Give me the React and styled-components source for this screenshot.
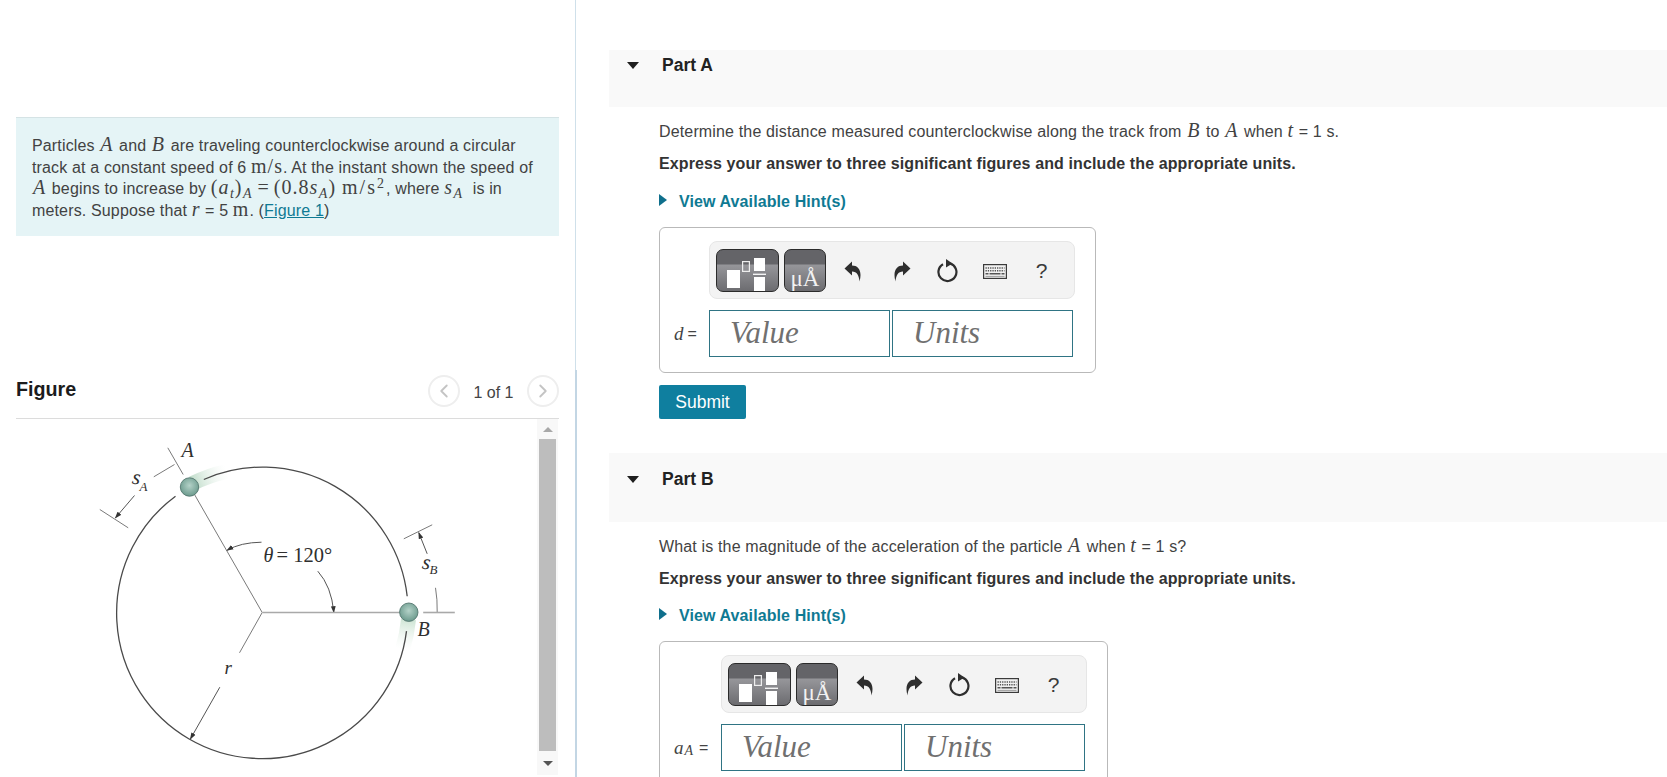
import styled, { createGlobalStyle } from 'styled-components';
import { ChevronLeft, ChevronRight } from 'lucide-react';

const GlobalStyle = createGlobalStyle`
  html, body {
    margin: 0;
    padding: 0;
    background: #fff;
    font-family: 'Liberation Sans', Arial, sans-serif;
    font-size: 16px;
    color: #424242;
  }
`;

const Page = styled.div`
  display: grid;
  grid-template-columns: 576px 1fr;
  height: 777px;
  overflow: hidden;
`;

const LeftColumn = styled.div`
  display: flex;
  flex-direction: column;
`;

const IntroArea = styled.div`
  height: 370px;
  box-sizing: border-box;
  padding: 117px 16px 0;
  border-right: 1px solid #cfe0ea;
`;

const Intro = styled.div`
  height: 119px;
  box-sizing: border-box;
  width: 543px;
  padding: 17px 16px 0;
  background: #e5f4f6;
  border-top: 1px solid #d5e3e5;
  line-height: 21.5px;
  letter-spacing: 0.15px;
  white-space: nowrap;
`;

const M = styled.span`
  font-family: 'Liberation Serif', 'Times New Roman', serif;
  font-size: 20px;
  font-style: ${(p) => (p.$roman ? 'normal' : 'italic')};
  letter-spacing: ${(p) => p.$spread || 1}px;
  line-height: 0;
`;

const Cap = styled(M)`
  margin: 0 1px;
`;

const Op = styled(M)`
  font-style: normal;
  margin: 0 5px;
  letter-spacing: 0;
`;

const Sub = styled.sub`
  margin-left: 0.5px;
  margin-right: ${(p) => p.$after || 0}px;
  font-family: 'Liberation Serif', 'Times New Roman', serif;
  font-style: italic;
  font-size: 14px;
  letter-spacing: 1px;
  line-height: 0;
`;

const Sup = styled.sup`
  margin-right: 2px;
  font-family: 'Liberation Serif', 'Times New Roman', serif;
  font-size: 14px;
  line-height: 0;
`;

const FigureLink = styled.a`
  color: #0f7a93;
  text-decoration: underline;
`;

const FigureSection = styled.div`
  flex: 1;
  display: flex;
  flex-direction: column;
  border-right: 2px solid #c3d6e4;
  margin-right: -1px;
`;

const FigureHead = styled.div`
  display: flex;
  justify-content: space-between;
  align-items: flex-start;
  height: 49px;
  box-sizing: border-box;
  margin: 0 16px;
  padding-top: 5px;
  border-bottom: 1px solid #dcdcdc;
`;

const FigureTitle = styled.h2`
  margin: 0;
  font-size: 19.7px;
  line-height: 29px;
  font-weight: bold;
  color: #1c1c1c;
`;

const Pager = styled.div`
  display: flex;
  align-items: center;
  gap: 13.5px;
  font-size: 16px;
  color: #444;
`;

const PagerCount = styled.span`
  padding-top: 3px;
`;

const PagerButton = styled.span`
  width: 32px;
  height: 32px;
  box-sizing: border-box;
  border: 2px solid #eeeeee;
  border-radius: 50%;
  display: flex;
  align-items: center;
  justify-content: center;
  color: #c4c4c4;
`;

const FigurePane = styled.div`
  display: flex;
  height: 357px;
`;

const FigureSvg = styled.svg`
  display: block;
  width: 537px;
  height: 357px;
  flex: none;
  font-family: 'Liberation Serif', 'Times New Roman', serif;
`;

const ScrollTrack = styled.div`
  width: 21px;
  height: 356px;
  background: #f8f8f8;
  display: flex;
  flex-direction: column;
  align-items: center;
`;

const ScrollArrow = styled.span`
  flex: none;
  height: ${(p) => p.$height}px;
  display: flex;
  align-items: center;
  justify-content: center;
  &::before {
    content: '';
    border-left: 5px solid transparent;
    border-right: 5px solid transparent;
    border-${(p) => (p.$down ? 'top' : 'bottom')}: 5px solid ${(p) => (p.$down ? '#555' : '#a8a8a8')};
  }
`;

const ScrollThumb = styled.div`
  flex: 1;
  width: 17px;
  background: #bdbdbd;
`;

const RightColumn = styled.div`
  padding: 50px 0 0 33px;
  min-width: 0;
`;

const PartHeader = styled.div`
  display: flex;
  align-items: flex-start;
  gap: 23px;
  height: ${(p) => p.$height}px;
  box-sizing: border-box;
  padding: ${(p) => p.$top}px 0 0 18px;
  background: #f9f9f9;
`;

const Caret = styled.span`
  flex: none;
  margin-top: 7px;
  border-left: 6.5px solid transparent;
  border-right: 6.5px solid transparent;
  border-top: 7px solid #1f1f1f;
`;

const PartTitle = styled.h3`
  margin: 0;
  font-size: 17.5px;
  line-height: 21px;
  font-weight: bold;
  color: #222;
`;

const PartBody = styled.div`
  padding-left: 50px;
  margin-bottom: 34px;
`;

const Question = styled.p`
  margin: 0;
  padding-top: 14px;
  line-height: 21px;
  letter-spacing: 0.15px;
  white-space: nowrap;
`;

const Instruction = styled.p`
  margin: 0;
  padding-top: 11px;
  line-height: 21px;
  font-weight: bold;
  letter-spacing: 0.11px;
  color: #333;
  white-space: nowrap;
`;

const HintToggle = styled.div`
  display: flex;
  align-items: center;
  gap: 12px;
  padding-top: ${(p) => p.$top}px;
  line-height: 21px;
  font-weight: bold;
  letter-spacing: 0.1px;
  color: #0f7a93;
`;

const HintCaret = styled.span`
  margin-top: -4px;
  border-top: 6.5px solid transparent;
  border-bottom: 6.5px solid transparent;
  border-left: 8px solid #0f6f8c;
`;

const AnswerBox = styled.div`
  display: grid;
  grid-template-columns: ${(p) => p.$labelWidth}px 366px;
  row-gap: 11px;
  width: fit-content;
  margin-top: 15px;
  padding: 13px 20px 15px 14px;
  border: 1px solid #b9b9b9;
  border-radius: 6px;
`;

const Toolbar = styled.div`
  grid-column: 2;
  display: flex;
  align-items: center;
  height: 58px;
  box-sizing: border-box;
  padding: 0 0 0 6px;
  background: #f3f3f3;
  border: 1px solid #e6e6e6;
  border-radius: 8px;
`;

const TemplateButton = styled.div`
  flex: none;
  width: ${(p) => p.$width}px;
  height: 43px;
  margin-right: 5px;
  box-sizing: border-box;
  border: 1px solid #2b2b2b;
  border-radius: 7px;
  overflow: hidden;
  background: linear-gradient(#646468 0, #646468 14px, #96969a 15px, #6c6c70 100%);
  display: flex;
  align-items: flex-end;
  justify-content: center;
`;

const TemplateSvg = styled.svg`
  display: block;
  width: 61px;
  height: 41px;
`;

const UnitGlyph = styled.span`
  font-family: 'Liberation Serif', 'Times New Roman', serif;
  font-size: 23px;
  line-height: 25px;
  color: #f2f2f2;
`;

const ToolSlot = styled.span`
  flex: none;
  width: 47px;
  margin-left: ${(p) => p.$left || 0}px;
  padding-top: 2px;
  display: flex;
  align-items: center;
  justify-content: center;
`;

const HelpMark = styled.span`
  font-size: 21px;
  color: #3a3a3a;
`;

const AnswerLabel = styled.div`
  display: flex;
  align-items: center;
  font-family: 'Liberation Serif', 'Times New Roman', serif;
  font-style: italic;
  font-size: 19px;
  color: #444;
  white-space: nowrap;
`;

const Equals = styled.span`
  font-family: 'Liberation Sans', Arial, sans-serif;
  font-style: normal;
  font-size: 16px;
  margin-left: ${(p) => p.$gap}px;
`;

const LabelSub = styled.span`
  font-size: 14px;
  margin: 6px 0 0 1px;
`;

const Inputs = styled.div`
  display: flex;
  gap: 2px;
`;

const AnswerInput = styled.div`
  width: 181px;
  height: 47px;
  box-sizing: border-box;
  padding-left: 20px;
  border: 1px solid #2f7484;
  font-family: 'Liberation Serif', 'Times New Roman', serif;
  font-style: italic;
  font-size: 31px;
  line-height: 44px;
  color: #707070;
`;

const SubmitButton = styled.button`
  display: block;
  width: 87px;
  height: 34px;
  margin-top: 12px;
  padding: 0;
  border: 0;
  border-radius: 2px;
  background: #0f7f9f;
  color: #fff;
  font-family: inherit;
  font-size: 17.5px;
`;

const UndoIcon = ({ flip }) => (
  <svg width="18" height="21" viewBox="0 0 18 21" aria-hidden="true" style={flip ? { transform: 'scaleX(-1)' } : undefined}>
    <path d="M0.5 7.5 L8 0.5 V4.5 C14.5 4.5 18.5 10 15.5 20.5 C15 14.5 13 10.5 8 10.5 V14.5 Z" fill="#2e2e2e" />
  </svg>
);

const ResetIcon = () => (
  <svg width="22" height="24" viewBox="0 0 22 24" aria-hidden="true">
    <path d="M13 4.4 A9 9 0 1 1 6 5.2" fill="none" stroke="#2e2e2e" strokeWidth="2.2" />
    <path d="M9 0 L15.5 4.4 L9 8.6 Z" fill="#2e2e2e" />
  </svg>
);

const KeyboardIcon = () => (
  <svg width="24" height="15" viewBox="0 0 24 15" aria-hidden="true">
    <rect x="0.6" y="0.6" width="22.8" height="13.8" fill="#f1f1f1" stroke="#3a3a3a" strokeWidth="1.2" />
    <path d="M2.5 4h19M2.5 6.8h19" stroke="#555" strokeWidth="1.5" strokeDasharray="1.3 1" />
    <path d="M2.5 9.8h3M18.5 9.8h3M6.5 9.8h11" stroke="#555" strokeWidth="1.5" />
    <path d="M2.5 12.4h19" stroke="#888" strokeWidth="0.8" />
  </svg>
);

const TemplateIcon = () => (
  <TemplateSvg viewBox="0 0 61 41" aria-hidden="true">
    <rect x="10" y="20" width="13" height="18" fill="#fff" />
    <rect x="25.6" y="11.6" width="6.8" height="9.8" fill="none" stroke="#eee" strokeWidth="1.2" />
    <rect x="37" y="8" width="11" height="13" fill="#fff" />
    <rect x="36" y="23.6" width="13" height="1.4" fill="#f4f4f4" />
    <rect x="37" y="27" width="11" height="14" fill="#fff" />
  </TemplateSvg>
);

const Circuit = () => (
  <FigureSvg viewBox="-0.5 419.5 537 357" role="img" aria-label="Particles A and B on a circular track">
    <defs>
      <linearGradient id="glowA" gradientUnits="userSpaceOnUse" x1="192" y1="484" x2="226" y2="470">
        <stop offset="0" stopColor="#bfdcc9" />
        <stop offset="1" stopColor="#eef6f0" stopOpacity="0" />
      </linearGradient>
      <linearGradient id="glowB" gradientUnits="userSpaceOnUse" x1="407" y1="618" x2="402" y2="650">
        <stop offset="0" stopColor="#c9e2d0" />
        <stop offset="1" stopColor="#eef6f0" stopOpacity="0" />
      </linearGradient>
      <radialGradient id="ball" cx="0.5" cy="0.42" r="0.55">
        <stop offset="0" stopColor="#b4d2c8" />
        <stop offset="1" stopColor="#6f9d90" />
      </radialGradient>
      <marker id="tip" markerWidth="7" markerHeight="6" refX="6" refY="3" orient="auto">
        <path d="M0 0.6 L7 3 L0 5.4 Z" fill="#333" />
      </marker>
    </defs>

    <path d="M192 484 A145.5 145.5 0 0 1 226 472" fill="none" stroke="url(#glowA)" strokeWidth="15" />
    <path d="M408 620 A145.5 145.5 0 0 1 402 650" fill="none" stroke="url(#glowB)" strokeWidth="15" />

    <g fill="none" stroke="#4a4a4a" strokeWidth="1.3">
      <path d="M203.3 480 A145.5 145.5 0 0 1 406.7 596.7" />
      <path d="M406 631.7 A145.5 145.5 0 1 1 175 496.7" />
    </g>

    <g fill="none" stroke="#7a7a7a" strokeWidth="1">
      <path d="M261.7 613 L194 495" />
      <path d="M261.7 613 L239 653.3" />
      <path d="M219.3 687.7 L190 739.3" stroke="#555" markerEnd="url(#tip)" />
      <path d="M261 542.7 Q240 543 226.7 550.7" stroke="#555" markerEnd="url(#tip)" />
      <path d="M317.3 571.7 Q331 587 333.3 612.7" stroke="#555" markerEnd="url(#tip)" />
      <path d="M167.3 448.3 L182.7 475" />
      <path d="M174 465 L153.3 477.3" />
      <path d="M134 496 L115 518.3" stroke="#555" markerEnd="url(#tip)" />
      <path d="M99.3 510 L127.7 528.3" />
      <path d="M403.3 539.3 L431.7 525.3" />
      <path d="M426.7 554.3 L418.3 533.3" stroke="#555" markerEnd="url(#tip)" />
      <path d="M435 588.3 Q437 600 436.7 613" />
    </g>
    <g stroke="#a9a9a9" strokeWidth="1.6">
      <path d="M262 613 H399.3" />
      <path d="M422.7 613 H454.3" />
    </g>

    <circle cx="189" cy="487.5" r="9.2" fill="url(#ball)" stroke="#55776f" strokeWidth="0.9" />
    <circle cx="408.3" cy="612.7" r="9.2" fill="url(#ball)" stroke="#55776f" strokeWidth="0.9" />

    <g fill="#2f2f2f" fontStyle="italic">
      <text x="181" y="457.5" fontSize="20">A</text>
      <text x="417" y="636" fontSize="20">B</text>
      <text x="224" y="674" fontSize="19">r</text>
      <text x="131" y="484" fontSize="21" transform="rotate(8 131 484)">s</text>
      <text x="139" y="491" fontSize="13">A</text>
      <text x="421" y="569" fontSize="21" transform="rotate(8 421 569)">s</text>
      <text x="429" y="574" fontSize="13">B</text>
      <text x="263" y="562" fontSize="20">θ</text>
    </g>
    <text x="276" y="562" fontSize="20.5" fill="#2f2f2f">= 120°</text>
  </FigureSvg>
);

const AnswerForm = ({ labelWidth, children }) => (
  <AnswerBox $labelWidth={labelWidth}>
    <Toolbar>
      <TemplateButton $width={63}>
        <TemplateIcon />
      </TemplateButton>
      <TemplateButton $width={42}>
        <UnitGlyph>μÅ</UnitGlyph>
      </TemplateButton>
      <ToolSlot $left={-2}>
        <UndoIcon />
      </ToolSlot>
      <ToolSlot $left={2}>
        <UndoIcon flip />
      </ToolSlot>
      <ToolSlot $left={-1}>
        <ResetIcon />
      </ToolSlot>
      <ToolSlot>
        <KeyboardIcon />
      </ToolSlot>
      <ToolSlot>
        <HelpMark>?</HelpMark>
      </ToolSlot>
    </Toolbar>
    <AnswerLabel>{children}</AnswerLabel>
    <Inputs>
      <AnswerInput>Value</AnswerInput>
      <AnswerInput>Units</AnswerInput>
    </Inputs>
  </AnswerBox>
);

const App = () => {
  return (
    <Page>
      <GlobalStyle />
      <LeftColumn>
        <IntroArea>
          <Intro>
            Particles <Cap>A</Cap> and <Cap>B</Cap> are traveling counterclockwise around a circular
            <br />
            track at a constant speed of 6 <M $roman>m/s</M>. At the instant shown the speed of
            <br />
            <Cap>A</Cap> begins to increase by <M $roman>(</M>
            <M>a</M>
            <Sub>t</Sub>
            <M $roman>)</M>
            <Sub>A</Sub>
            <Op>=</Op>
            <M $roman>(0.8</M>
            <M>s</M>
            <Sub>A</Sub>
            <M $roman>) </M>
            <M $roman $spread={2}>m/s</M>
            <Sup>2</Sup>, where <M>s</M>
            <Sub $after={5}>A</Sub> is in
            <br />
            meters. Suppose that <M>r</M> = 5 <M $roman>m</M>. (<FigureLink>Figure 1</FigureLink>)
          </Intro>
        </IntroArea>
        <FigureSection>
          <FigureHead>
            <FigureTitle>Figure</FigureTitle>
            <Pager>
              <PagerButton>
                <ChevronLeft size={22} />
              </PagerButton>
              <PagerCount>1 of 1</PagerCount>
              <PagerButton>
                <ChevronRight size={22} />
              </PagerButton>
            </Pager>
          </FigureHead>
          <FigurePane>
            <Circuit />
            <ScrollTrack>
              <ScrollArrow $height={20} />
              <ScrollThumb />
              <ScrollArrow $height={24} $down />
            </ScrollTrack>
          </FigurePane>
        </FigureSection>
      </LeftColumn>

      <RightColumn>
        <PartHeader $height={57} $top={5}>
          <Caret />
          <PartTitle>Part A</PartTitle>
        </PartHeader>
        <PartBody>
          <Question>
            Determine the distance measured counterclockwise along the track from <Cap>B</Cap> to <Cap>A</Cap> when <M>t</M> = 1 s.
          </Question>
          <Instruction>Express your answer to three significant figures and include the appropriate units.</Instruction>
          <HintToggle $top={17}>
            <HintCaret />
            View Available Hint(s)
          </HintToggle>
          <AnswerForm labelWidth={35}>
            d<Equals $gap={4}>=</Equals>
          </AnswerForm>
          <SubmitButton>Submit</SubmitButton>
        </PartBody>

        <PartHeader $height={69} $top={16}>
          <Caret />
          <PartTitle>Part B</PartTitle>
        </PartHeader>
        <PartBody>
          <Question>
            What is the magnitude of the acceleration of the particle <Cap>A</Cap> when <M>t</M> = 1 s?
          </Question>
          <Instruction>Express your answer to three significant figures and include the appropriate units.</Instruction>
          <HintToggle $top={16}>
            <HintCaret />
            View Available Hint(s)
          </HintToggle>
          <AnswerForm labelWidth={47}>
            a<LabelSub>A</LabelSub>
            <Equals $gap={6}>=</Equals>
          </AnswerForm>
        </PartBody>
      </RightColumn>
    </Page>
  );
};

export default App;
